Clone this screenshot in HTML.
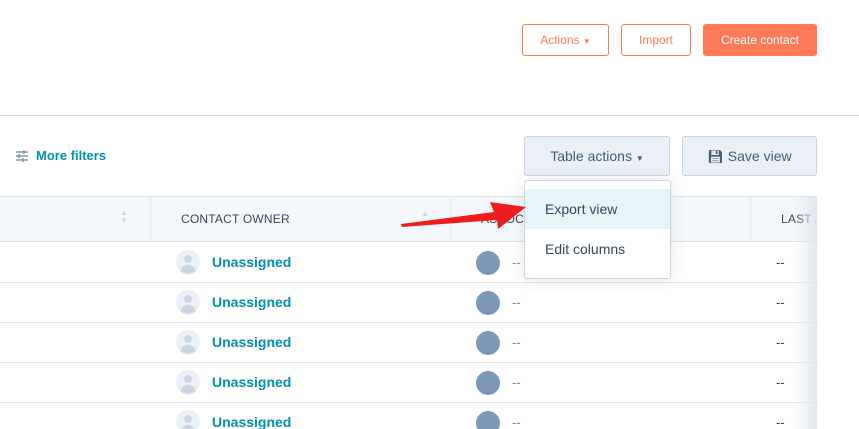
<html><head><style>
body{margin:0;width:859px;height:429px;overflow:hidden;background:#fff;font-family:"Liberation Sans",sans-serif;position:relative}
.a{position:absolute}
.ob{border:1px solid #ff7a59;color:#ff7a59;border-radius:3px;font-size:12px;text-align:center;line-height:30px;box-sizing:border-box;height:32px}
.gb{background:#eaf0f6;border:1px solid #cbd6e2;border-radius:3px;color:#425b76;font-size:14px;text-align:center;box-sizing:border-box;height:40px;line-height:38px}
.row{position:absolute;left:0;width:817px;height:40px;border-bottom:1px solid #dfe3eb}
.av{position:absolute;left:176px;top:8px;width:24px;height:24px;border-radius:50%;background:#eaf0f6;overflow:hidden}
.av:before{content:"";position:absolute;left:8px;top:5px;width:8px;height:8px;border-radius:50%;background:#cbd6e2}
.av:after{content:"";position:absolute;left:5px;top:15px;width:14px;height:12px;border-radius:50%;background:#cbd6e2}
.un{position:absolute;left:212px;top:12px;color:#0091ae;font-weight:bold;font-size:14px}
.dot{position:absolute;left:476px;top:9px;width:24px;height:24px;border-radius:50%;background:#7c98b6}
.d1{position:absolute;left:512px;top:13px;color:#7c98b6;font-size:13px}
.d2{position:absolute;left:776px;top:13px;color:#33475b;font-size:13px}
.th{font-size:12px;color:#33475b;letter-spacing:.2px;white-space:nowrap}
#tbl{position:absolute;left:0;top:0;width:817px;height:429px;overflow:hidden}
</style></head><body>
<div class="a ob" style="left:522px;top:24px;width:87px">Actions <span style="font-size:8px">▼</span></div>
<div class="a ob" style="left:621px;top:24px;width:70px">Import</div>
<div class="a ob" style="left:703px;top:24px;width:114px;background:#ff7a59;color:#fff">Create contact</div>
<div class="a" style="left:0;top:115px;width:859px;height:1px;background:#cbd6e2"></div>
<svg class="a" style="left:15px;top:149px" width="14" height="14" viewBox="0 0 14 14" stroke="#7c98b6" stroke-width="1.5"><path d="M1 3h12M1 7h12M1 11h12"/><path d="M9 1v4M4 5v4M8 9v4"/></svg>
<div class="a" style="left:36px;top:148px;color:#0091ae;font-weight:bold;font-size:13px">More filters</div>
<div class="a gb" style="left:524px;top:136px;width:146px">Table actions <span style="font-size:8px">▼</span></div>
<div class="a gb" style="left:682px;top:136px;width:135px"><span style="font-size:13px">💾︎</span> Save view</div>
<div id="tbl">
<div class="a" style="left:0;top:196px;width:817px;height:44px;background:#f5f8fa;border-top:1px solid #dfe3eb;border-bottom:1px solid #dfe3eb"></div>
<div class="a" style="left:150px;top:197px;width:2px;height:44px;background:#eaf0f6"></div>
<div class="a" style="left:450px;top:197px;width:2px;height:44px;background:#eaf0f6"></div>
<div class="a" style="left:750px;top:197px;width:2px;height:44px;background:#eaf0f6"></div>
<div class="a" style="left:120px;top:209px;color:#cbd6e2;font-size:8px;line-height:8px">▲<br>▼</div>
<div class="a" style="left:421px;top:209px;color:#cbd6e2;font-size:8px">▲</div>
<div class="a th" style="left:181px;top:212px">CONTACT OWNER</div>
<div class="a th" style="left:481px;top:212px">ASSOCI</div>
<div class="a th" style="left:781px;top:212px">LAST A</div>
<div class="row" style="top:242px"><div class="av"></div><div class="un">Unassigned</div><div class="dot"></div><div class="d1">--</div><div class="d2">--</div></div>
<div class="row" style="top:282px"><div class="av"></div><div class="un">Unassigned</div><div class="dot"></div><div class="d1">--</div><div class="d2">--</div></div>
<div class="row" style="top:322px"><div class="av"></div><div class="un">Unassigned</div><div class="dot"></div><div class="d1">--</div><div class="d2">--</div></div>
<div class="row" style="top:362px"><div class="av"></div><div class="un">Unassigned</div><div class="dot"></div><div class="d1">--</div><div class="d2">--</div></div>
<div class="row" style="top:402px"><div class="av"></div><div class="un">Unassigned</div><div class="dot"></div><div class="d1">--</div><div class="d2">--</div></div>
<div class="a" style="left:793px;top:197px;width:24px;height:232px;background:linear-gradient(to right,rgba(234,240,246,0),rgba(223,230,238,.95))"></div>
</div>
<div class="a" style="left:524px;top:180px;width:145px;height:97px;background:#fff;border:1px solid #cbd6e2;border-radius:3px;box-shadow:0 1px 16px rgba(45,62,80,.12)">
<div style="position:absolute;left:0;top:8px;width:145px;height:40px;background:#e5f5f8"></div>
<div style="position:absolute;left:20px;top:20px;font-size:14px;color:#33475b">Export view</div>
<div style="position:absolute;left:20px;top:60px;font-size:14px;color:#33475b">Edit columns</div>
</div>
<svg class="a" style="left:398px;top:195px" width="130" height="40" viewBox="0 0 130 40"><path d="M3 29 L96 17 L92 7 L128 12 L100 34 L99 25 L4 32 Z" fill="#ee1c1c"/></svg>
</body></html>
